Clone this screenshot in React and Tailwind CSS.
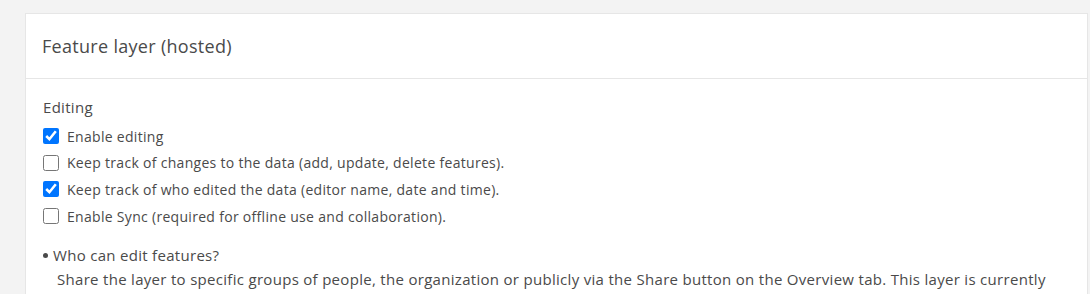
import React from "react";

const rows = [
  { checked: true, label: "Enable editing" },
  { checked: false, label: "Keep track of changes to the data (add, update, delete features)." },
  { checked: true, label: "Keep track of who edited the data (editor name, date and time)." },
  { checked: false, label: "Enable Sync (required for offline use and collaboration)." },
];

export default function App() {
  return (
    <div className="w-[1090px] h-[294px] overflow-hidden bg-[#f3f3f3] pt-[13px] pl-[25px] pr-[2px] tracking-[0.3px]" style={{ fontFamily: "'Open Sans', sans-serif" }}>
      <div className="bg-white border border-[#e6e6e6] h-[300px]">
        <div className="h-[65px] flex items-center pl-[16px] border-b border-[#e6e6e6]">
          <h2 className="text-[18px] text-[#4a4a4a] leading-none">Feature layer (hosted)</h2>
        </div>
        <div className="pl-[17px] pt-[18px]">
          <div className="text-[15px] text-[#4a4a4a] leading-[20px] mb-[6px]">Editing</div>
          <div className="flex flex-col">
            {rows.map((r, i) => (
              <label key={i} className="flex items-center h-[26.6px] gap-[8px]">
                <input type="checkbox" defaultChecked={r.checked} className="w-[16px] h-[16px] m-0 accent-[#0075ff]" />
                <span className="text-[14px] text-[#4a4a4a]">{r.label}</span>
              </label>
            ))}
          </div>
          <div className="mt-[14px] text-[14px] text-[#4a4a4a] leading-[24px]">
            <div className="flex items-center gap-[5px]">
              <span className="w-[5px] h-[5px] rounded-full bg-[#4a4a4a] inline-block"></span>
              <span className="text-[15px]">Who can edit features?</span>
            </div>
            <div className="pl-[14px] text-[15px] whitespace-nowrap">
              Share the layer to specific groups of people, the organization or publicly via the Share button on the Overview tab. This layer is currently
            </div>
          </div>
        </div>
      </div>
    </div>
  );
}
